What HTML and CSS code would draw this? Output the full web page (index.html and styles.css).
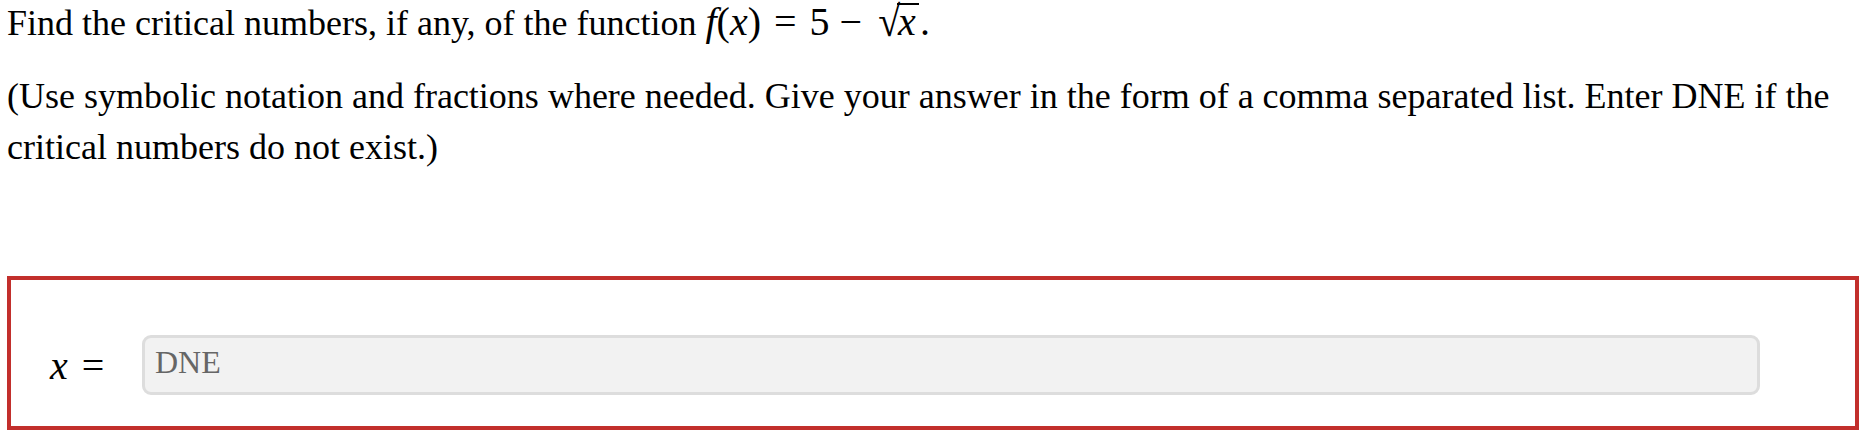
FILE: index.html
```html
<!DOCTYPE html>
<html lang="en">
<head>
  <meta charset="UTF-8">
  <title>Critical numbers</title>
  <link rel="stylesheet" href="styles.css">
</head>
<body>

  <div class="question">
    <p class="prompt prompt-first">
      Find the critical numbers, if any, of the function
      <span class="math"><span class="mi">f</span><span class="paren">(</span><span class="mi">x</span><span class="paren">)</span><span class="mo rel">=</span><span class="mn">5</span><span class="mo bin">&minus;</span><span class="sqrt"><span class="radical">&radic;</span><span class="radicand"><span class="mi">x</span></span></span><span class="dot">.</span></span>
    </p>
    <p class="prompt">
      (Use symbolic notation and fractions where needed. Give your answer in the form of a comma separated list. Enter DNE if the critical numbers do not exist.)
    </p>
  </div>

  <div class="answer-box">
    <div class="answer-row">
      <span class="answer-label"><span class="mi">x</span><span class="mo">=</span></span>
      <input class="answer-input" type="text" value="DNE" readonly>
    </div>
  </div>

  <div class="feedback">Incorrect</div>

</body>
</html>
```

FILE: styles.css
```css
body {
  margin: 0;
  padding: 0 13px 0 7px;
  background-color: #fff;
  color: #000;
  font-family: "Liberation Serif", "Times New Roman", serif;
  font-size: 36px;
  overflow: hidden;
}

.prompt {
  margin: 26px 0 0 0;
  line-height: 51px;
}

.prompt-first {
  margin-top: 0;
  line-height: 44px;
}

/* inline math */
.math {
  white-space: nowrap;
  font-family: "Liberation Serif", "Times New Roman", serif;
  font-size: 40px;
}

.mi {
  font-style: italic;
}

.mo.rel {
  margin: 0 13px;
}

.mo.bin {
  margin: 0 12px 0 10px;
}

.sqrt {
  display: inline-block;
  margin-left: 4px;
}

.radical {
  display: inline-block;
  transform: scaleY(1.08);
}

.radicand {
  display: inline-block;
  border-top: 2px solid #000;
  line-height: 34px;
  padding: 0 3px 0 1px;
  margin-left: -3px;
}

.dot {
  margin-left: 1px;
}

.answer-box {
  margin-top: 103px;
  border: 4px solid #c22f2c;
  padding: 55px 0 31px 39px;
}

.answer-row {
  display: flex;
  align-items: center;
}

.answer-label {
  width: 92px;
  font-size: 40px;
}

.answer-label .mo {
  margin-left: 14px;
}

.answer-input {
  width: 1618px;
  height: 60px;
  box-sizing: border-box;
  border: 3px solid #dddddd;
  border-radius: 9px;
  background-color: #f2f2f2;
  padding: 0 10px 5px;
  font-family: "Liberation Serif", "Times New Roman", serif;
  font-size: 32px;
  color: #666;
  outline: none;
}

.feedback {
  margin-top: 13px;
  padding-left: 7px;
  color: #c22f2c;
  font-family: "Liberation Sans", Arial, sans-serif;
  font-weight: bold;
  font-size: 22px;
}
```
